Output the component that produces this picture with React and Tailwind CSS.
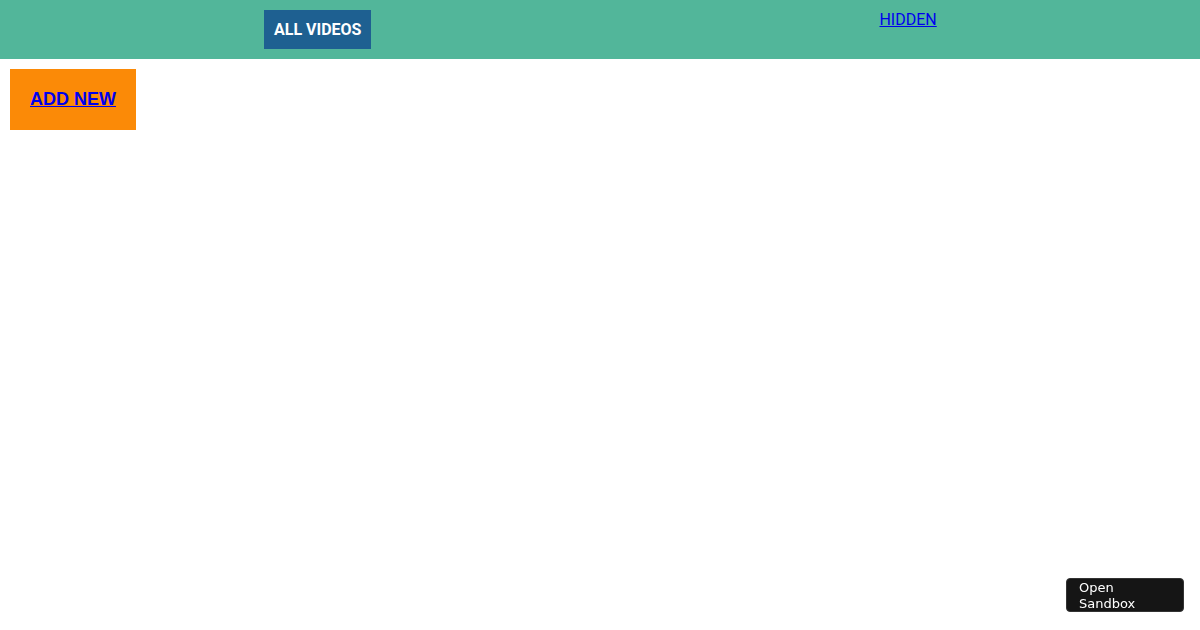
export default function App() {
  return (
    <div className="min-h-[630px] bg-white" style={{ fontFamily: "Roboto, sans-serif" }}>
      <header className="flex items-start bg-[#52b69a] h-[59px] pt-[10px]">
        <div className="ml-[264px] bg-[#1e6091] px-[10px] py-[10px] text-white font-bold text-[16px] leading-[19px]">
          ALL VIDEOS
        </div>
        <a href="#" className="ml-[508px] text-[16px] leading-[19px] text-[#0000ee] underline">
          HIDDEN
        </a>
      </header>
      <div className="p-[10px]">
        <div className="w-fit bg-[#fb8a07] px-[20px] py-[20px]">
          <a
            href="#"
            className="block text-[18px] leading-[21px] font-bold text-[#0000ee] underline"
            style={{ fontFamily: '"Liberation Sans", Arial, sans-serif' }}
          >
            ADD NEW
          </a>
        </div>
      </div>
      <div
        className="fixed right-[16px] bottom-[18px] w-[118px] h-[34px] rounded-[4px] bg-[#151515] border border-[#333] pl-[12px] pt-[1px] text-white text-[13px] leading-[16px]"
        style={{ fontFamily: '"DejaVu Sans", sans-serif' }}
      >
        <div>Open</div>
        <div>Sandbox</div>
      </div>
    </div>
  );
}
